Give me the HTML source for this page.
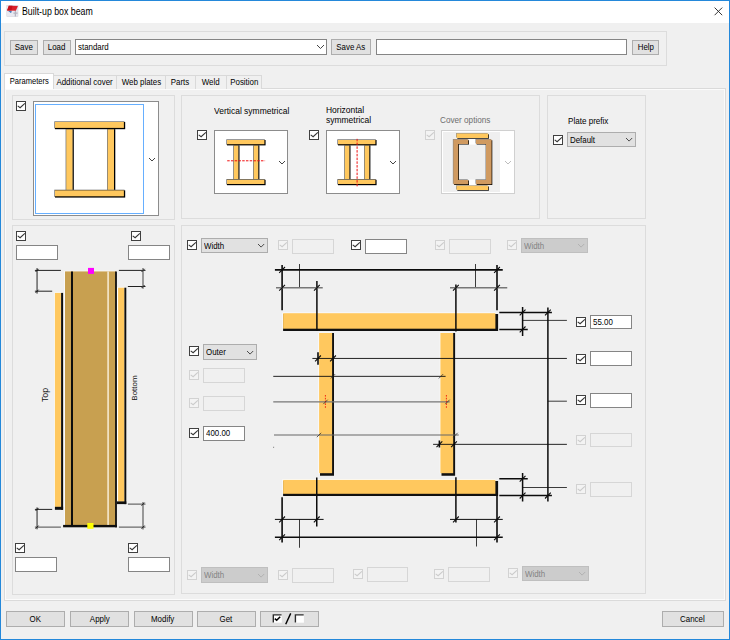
<!DOCTYPE html>
<html><head><meta charset="utf-8"><title>Built-up box beam</title>
<style>
html,body{margin:0;padding:0;}
body{width:730px;height:640px;overflow:hidden;background:#f0f0f0;position:relative;font-family:"Liberation Sans",sans-serif;font-size:8.6px;color:#000;}
.a{position:absolute;box-sizing:border-box;}
#win{left:0;top:0;width:730px;height:640px;border:1px solid #2488da;background:#f0f0f0;}
#title{left:1px;top:1px;width:728px;height:22px;background:#fff;}
.gb{border:1px solid #dcdcdc;}
.btn{background:#e1e1e1;border:1px solid #adadad;text-align:center;white-space:nowrap;}
.in{background:#fff;border:1px solid #858585;padding-left:2px;white-space:nowrap;}
.in.d{background:#f0f0f0;border-color:#d6d6d6;}
.cmb{background:#e1e1e1;border:1px solid #adadad;padding-left:2px;white-space:nowrap;}
.cmb.d{background:#cccccc;border-color:#bfbfbf;color:#838383;}
.cb{background:#fff;border:1px solid #404040;}
.cb.d{border-color:#d2d2d2;background:#f3f3f3;}
.cb svg{position:absolute;left:-1px;top:-1px;width:10px;height:10px;}
.t{white-space:nowrap;line-height:11px;}
.x{display:inline-block;transform:scaleX(.92);transform-origin:0 50%;}
.xc{display:inline-block;transform:scaleX(.92);transform-origin:50% 50%;}
.tab{border:1px solid #d9d9d9;border-bottom:none;background:#f0f0f0;text-align:center;white-space:nowrap;}
</style></head><body>
<div class="a" id="win"></div>
<div class="a" id="title"></div>
<svg class="a" style="left:6px;top:5px;width:13px;height:13px" viewBox="6 5 13 13"><rect x="6.8" y="5.4" width="11.2" height="11.2" fill="#e9e9f1" stroke="#cfcfd8" stroke-width="0.5"/><path d="M8.8 5.7L17.9 5.9L15.9 10.8L7.1 10.4Z" fill="#d8202a"/><path d="M8.8 5.7L12.5 5.8L11.5 10.6L7.1 10.4Z" fill="#c40f1a"/><path d="M8.2 11.1L11.9 11.3L11 13Z" fill="#2a6ab4"/><path d="M13.4 13.2H17.6M15.4 11V16.4" stroke="#b4b4c0" stroke-width="1.3"/></svg>
<div class="a t" style="left:22.4px;top:6px;font-size:10.4px;"><span class="x" style="transform:scaleX(.845)">Built-up box beam</span></div>
<svg class="a" style="left:713px;top:5.5px;width:11px;height:11px" viewBox="0 0 11 11"><path d="M1.6 1.6l7.6 7.6M9.2 1.6l-7.6 7.6" stroke="#2a2a2a" stroke-width="0.95" fill="none"/></svg>

<div class="a gb" style="left:4px;top:31px;width:663px;height:35px"></div>
<div class="a btn" style="left:10px;top:40px;width:28px;height:15px;line-height:13px"><span class="xc">Save</span></div>
<div class="a btn" style="left:43px;top:40px;width:28px;height:15px;line-height:13px"><span class="xc">Load</span></div>
<div class="a in" style="left:75px;top:39px;width:252px;height:16px;line-height:14px"><span class="x">standard</span></div>
<svg class="a" style="left:315.5px;top:44.25px;width:9px;height:5.5px" viewBox="-1 -1 9 5.5"><path d="M0 0L3.5 3.5L7 0" stroke="#444" stroke-width="1" fill="none"/></svg>
<div class="a btn" style="left:331px;top:39px;width:40px;height:16px;line-height:14px"><span class="xc">Save As</span></div>
<div class="a in" style="left:376px;top:39px;width:251px;height:16px;line-height:14px"><span class="x"></span></div>
<div class="a btn" style="left:632px;top:40px;width:27px;height:15px;line-height:13px"><span class="xc">Help</span></div>
<div class="a" style="left:4px;top:88px;width:722px;height:513px;border:1px solid #dadada;background:#f0f0f0;box-shadow:inset 0 0 0 1px #fbfbfb;"></div>
<div class="a tab" style="left:52px;top:75px;width:65px;height:14px;line-height:13px;"><span class="xc">Additional cover</span></div>
<div class="a tab" style="left:116px;top:75px;width:50px;height:14px;line-height:13px;"><span class="xc">Web plates</span></div>
<div class="a tab" style="left:165px;top:75px;width:31px;height:14px;line-height:13px;"><span class="xc">Parts</span></div>
<div class="a tab" style="left:195px;top:75px;width:32px;height:14px;line-height:13px;"><span class="xc">Weld</span></div>
<div class="a tab" style="left:226px;top:75px;width:36px;height:14px;line-height:13px;"><span class="xc">Position</span></div>
<div class="a tab" style="left:4px;top:73px;width:50px;height:16px;line-height:15px;background:#fff;"><span class="xc" style="transform:scaleX(0.88)">Parameters</span></div>
<div class="a gb" style="left:12px;top:95px;width:163px;height:125px"></div>
<div class="a gb" style="left:181px;top:95px;width:359px;height:124px"></div>
<div class="a gb" style="left:547px;top:95px;width:99px;height:124px"></div>
<div class="a gb" style="left:12px;top:225px;width:163px;height:370px"></div>
<div class="a gb" style="left:181px;top:225px;width:465px;height:369px"></div>
<div class="a cb" style="left:16px;top:101px;width:10px;height:10px"><svg viewBox="0 0 10 10"><path d="M1.7 4.9L4.1 6.7L8.9 2.3" stroke="#333" stroke-width="1.05" fill="none"/></svg></div>
<div class="a" style="left:33px;top:101px;width:126px;height:115px;background:#fff;border:1px solid #8c8c8c"></div>
<div class="a" style="left:35px;top:104px;width:109px;height:110px;border:1px solid #66afff"></div>
<svg class="a" style="left:52.7px;top:119.8px;width:74.2px;height:79.6px" viewBox="-2 -2 74.2 79.6"><rect x="10.600000000000001" y="7.2" width="7.5" height="61.199999999999996" fill="#707070"/><rect x="17.5" y="7.2" width="1.3" height="61.199999999999996" fill="#000"/><rect x="11.3" y="7.2" width="6.2" height="61.199999999999996" fill="#ffc85e"/><rect x="52.099999999999994" y="7.2" width="7.5" height="61.199999999999996" fill="#707070"/><rect x="59.0" y="7.2" width="1.3" height="61.199999999999996" fill="#000"/><rect x="52.8" y="7.2" width="6.2" height="61.199999999999996" fill="#ffc85e"/><rect x="-0.7" y="-0.7" width="70.2" height="7.2" fill="#707070"/><rect x="0" y="0" width="70.2" height="7.2" fill="#000"/><rect x="0" y="0" width="68.9" height="5.9" fill="#ffc85e"/><rect x="-0.7" y="67.69999999999999" width="70.2" height="7.2" fill="#707070"/><rect x="0" y="68.39999999999999" width="70.2" height="7.2" fill="#000"/><rect x="0" y="68.39999999999999" width="68.9" height="5.9" fill="#ffc85e"/></svg>
<svg class="a" style="left:147.5px;top:157.0px;width:8px;height:5px" viewBox="-1 -1 8 5"><path d="M0 0L3.0 3L6 0" stroke="#444" stroke-width="1" fill="none"/></svg>
<div class="a t" style="left:214px;top:106px;color:#000;"><span class="x" style="transform:scaleX(0.985)">Vertical symmetrical</span></div>
<div class="a cb" style="left:197px;top:130px;width:10px;height:10px"><svg viewBox="0 0 10 10"><path d="M1.7 4.9L4.1 6.7L8.9 2.3" stroke="#333" stroke-width="1.05" fill="none"/></svg></div>
<div class="a" style="left:214px;top:130px;width:74px;height:64px;background:#fff;border:1px solid #8c8c8c"></div>
<svg class="a" style="left:224.8px;top:137.7px;width:42.6px;height:49.2px" viewBox="-2 -2 42.6 49.2"><rect x="6.2" y="5.4" width="5.6" height="34.400000000000006" fill="#707070"/><rect x="11.3" y="5.4" width="1.2" height="34.400000000000006" fill="#000"/><rect x="6.9" y="5.4" width="4.3999999999999995" height="34.400000000000006" fill="#ffc85e"/><rect x="26.1" y="5.4" width="5.6" height="34.400000000000006" fill="#707070"/><rect x="31.2" y="5.4" width="1.2" height="34.400000000000006" fill="#000"/><rect x="26.8" y="5.4" width="4.3999999999999995" height="34.400000000000006" fill="#ffc85e"/><rect x="-0.7" y="-0.7" width="38.6" height="5.4" fill="#707070"/><rect x="0" y="0" width="38.6" height="5.4" fill="#000"/><rect x="0" y="0" width="37.4" height="4.2" fill="#ffc85e"/><rect x="-0.7" y="39.1" width="38.6" height="5.4" fill="#707070"/><rect x="0" y="39.800000000000004" width="38.6" height="5.4" fill="#000"/><rect x="0" y="39.800000000000004" width="37.4" height="4.2" fill="#ffc85e"/><path d="M0.2 20.8H38.1" stroke="#f01010" stroke-width="1" stroke-dasharray="2.5 1.25"/></svg>
<svg class="a" style="left:277.5px;top:159.5px;width:8px;height:5px" viewBox="-1 -1 8 5"><path d="M0 0L3.0 3L6 0" stroke="#444" stroke-width="1" fill="none"/></svg>
<div class="a t" style="left:326px;top:105px;color:#000;"><span class="x" style="transform:scaleX(0.985)">Horizontal</span></div>
<div class="a t" style="left:326px;top:115px;color:#000;"><span class="x" style="transform:scaleX(0.985)">symmetrical</span></div>
<div class="a cb" style="left:309px;top:130px;width:10px;height:10px"><svg viewBox="0 0 10 10"><path d="M1.7 4.9L4.1 6.7L8.9 2.3" stroke="#333" stroke-width="1.05" fill="none"/></svg></div>
<div class="a" style="left:326px;top:130px;width:74px;height:64px;background:#fff;border:1px solid #8c8c8c"></div>
<svg class="a" style="left:336.4px;top:137.7px;width:42.6px;height:49.2px" viewBox="-2 -2 42.6 49.2"><rect x="6.2" y="5.4" width="5.6" height="34.400000000000006" fill="#707070"/><rect x="11.3" y="5.4" width="1.2" height="34.400000000000006" fill="#000"/><rect x="6.9" y="5.4" width="4.3999999999999995" height="34.400000000000006" fill="#ffc85e"/><rect x="26.1" y="5.4" width="5.6" height="34.400000000000006" fill="#707070"/><rect x="31.2" y="5.4" width="1.2" height="34.400000000000006" fill="#000"/><rect x="26.8" y="5.4" width="4.3999999999999995" height="34.400000000000006" fill="#ffc85e"/><rect x="-0.7" y="-0.7" width="38.6" height="5.4" fill="#707070"/><rect x="0" y="0" width="38.6" height="5.4" fill="#000"/><rect x="0" y="0" width="37.4" height="4.2" fill="#ffc85e"/><rect x="-0.7" y="39.1" width="38.6" height="5.4" fill="#707070"/><rect x="0" y="39.800000000000004" width="38.6" height="5.4" fill="#000"/><rect x="0" y="39.800000000000004" width="37.4" height="4.2" fill="#ffc85e"/><path d="M19.1 -4.9V49.3" stroke="#f01010" stroke-width="1" stroke-dasharray="2.5 1.25"/></svg>
<svg class="a" style="left:389.0px;top:159.5px;width:8px;height:5px" viewBox="-1 -1 8 5"><path d="M0 0L3.0 3L6 0" stroke="#444" stroke-width="1" fill="none"/></svg>
<div class="a t" style="left:440px;top:115px;color:#6d6d6d;"><span class="x" style="transform:scaleX(0.95)">Cover options</span></div>
<div class="a cb d" style="left:425px;top:130px;width:10px;height:10px"><svg viewBox="0 0 10 10"><path d="M1.7 4.9L4.1 6.7L8.9 2.3" stroke="#cbcbcb" stroke-width="1.05" fill="none"/></svg></div>
<div class="a" style="left:441px;top:130px;width:74px;height:64px;background:#fff;border:1px solid #d0d0d0"></div>
<div class="a" style="left:443px;top:132px;width:57px;height:60px;background:#efefef"></div>
<svg class="a" style="left:450px;top:131px;width:46px;height:62px" viewBox="450 131 46 62"><path d="M456.6 133.6H488.2V138H456.6Z" fill="#8a8a8a" transform="translate(-0.55 -0.55)"/><path d="M456.6 133.6H488.2V138H456.6Z" fill="#000" transform="translate(0.7 0.7)"/><path d="M456.6 133.6H488.2V138H456.6Z" fill="#ffc85e"/><path d="M456.6 185.8H488.2V190H456.6Z" fill="#8a8a8a" transform="translate(-0.55 -0.55)"/><path d="M456.6 185.8H488.2V190H456.6Z" fill="#000" transform="translate(0.7 0.7)"/><path d="M456.6 185.8H488.2V190H456.6Z" fill="#ffc85e"/><rect x="469" y="139" width="6.6" height="5.6" fill="#fff"/><rect x="469" y="179.6" width="6.6" height="5.6" fill="#fff"/><path d="M453.4 139.5H468.3V143.9H458.3V179.9H468.3V184.3H453.4Z" fill="#8a8a8a" transform="translate(-0.55 -0.55)"/><path d="M453.4 139.5H468.3V143.9H458.3V179.9H468.3V184.3H453.4Z" fill="#000" transform="translate(0.7 0.7)"/><path d="M453.4 139.5H468.3V143.9H458.3V179.9H468.3V184.3H453.4Z" fill="#d09a60"/><path d="M476 139.5H491.6V184.3H476V179.9H486V143.9H476Z" fill="#8a8a8a" transform="translate(-0.55 -0.55)"/><path d="M476 139.5H491.6V184.3H476V179.9H486V143.9H476Z" fill="#000" transform="translate(0.7 0.7)"/><path d="M476 139.5H491.6V184.3H476V179.9H486V143.9H476Z" fill="#d09a60"/></svg>
<svg class="a" style="left:504.0px;top:159.5px;width:8px;height:5px" viewBox="-1 -1 8 5"><path d="M0 0L3.0 3L6 0" stroke="#bdbdbd" stroke-width="1" fill="none"/></svg>
<div class="a t" style="left:568px;top:116px;color:#000;"><span class="x" style="transform:scaleX(0.94)">Plate prefix</span></div>
<div class="a cb" style="left:553px;top:135px;width:10px;height:10px"><svg viewBox="0 0 10 10"><path d="M1.7 4.9L4.1 6.7L8.9 2.3" stroke="#333" stroke-width="1.05" fill="none"/></svg></div>
<div class="a cmb" style="left:567px;top:132px;width:69px;height:15px;line-height:14px"><span class="x">Default</span></div>
<svg class="a" style="left:625.4px;top:137.25px;width:8.2px;height:5.1px" viewBox="-1 -1 8.2 5.1"><path d="M0 0L3.1 3.1L6.2 0" stroke="#4a4a4a" stroke-width="1" fill="none"/></svg>
<div class="a cb" style="left:16px;top:231px;width:10px;height:10px"><svg viewBox="0 0 10 10"><path d="M1.7 4.9L4.1 6.7L8.9 2.3" stroke="#333" stroke-width="1.05" fill="none"/></svg></div>
<div class="a in" style="left:16px;top:245px;width:42px;height:15px;line-height:13px"><span class="x"></span></div>
<div class="a cb" style="left:131px;top:231px;width:10px;height:10px"><svg viewBox="0 0 10 10"><path d="M1.7 4.9L4.1 6.7L8.9 2.3" stroke="#333" stroke-width="1.05" fill="none"/></svg></div>
<div class="a in" style="left:128px;top:245px;width:42px;height:15px;line-height:13px"><span class="x"></span></div>
<div class="a cb" style="left:15px;top:543px;width:10px;height:10px"><svg viewBox="0 0 10 10"><path d="M1.7 4.9L4.1 6.7L8.9 2.3" stroke="#333" stroke-width="1.05" fill="none"/></svg></div>
<div class="a in" style="left:15px;top:557px;width:42px;height:15px;line-height:13px"><span class="x"></span></div>
<div class="a cb" style="left:128px;top:543px;width:10px;height:10px"><svg viewBox="0 0 10 10"><path d="M1.7 4.9L4.1 6.7L8.9 2.3" stroke="#333" stroke-width="1.05" fill="none"/></svg></div>
<div class="a in" style="left:128px;top:557px;width:42px;height:15px;line-height:13px"><span class="x"></span></div>
<svg class="a" style="left:30px;top:262px;width:125px;height:272px" viewBox="30 262 125 272">
<rect x="64.4" y="270.8" width="52" height="255" fill="#fff"/>
<rect x="54.4" y="292.4" width="7" height="216" fill="#fff"/>
<rect x="117" y="287.2" width="8" height="216" fill="#fff"/>
<rect x="65" y="271.4" width="51" height="255" fill="#c8a050"/>
<rect x="54.9" y="292.9" width="6" height="214" fill="#ffc85e"/>
<rect x="118.1" y="287.7" width="6.4" height="214" fill="#ffc85e"/>
<g fill="#0e0e0e">
<rect x="61.1" y="292.9" width="2" height="216.9"/>
<rect x="54.9" y="506.8" width="8.2" height="3"/>
<rect x="124.4" y="287.7" width="1.9" height="216.4"/>
<rect x="116.9" y="501.4" width="9.4" height="2.7"/>
<rect x="71" y="271.5" width="2" height="255"/>
<rect x="115.1" y="271.5" width="1.8" height="255.8"/>
<rect x="63.1" y="524.9" width="53.8" height="2.4"/>
</g>
<rect x="107.3" y="271.4" width="1.6" height="253.5" fill="#f6e8cf"/>
<rect x="88" y="267.9" width="6" height="6" fill="#ff00ff"/>
<rect x="87.3" y="523" width="6.2" height="5.8" fill="#ffff00"/>
<g stroke="#222" stroke-width="1" fill="none">
<path d="M37.05 268.1V293.6M34.9 270.4H60.9M34.9 291.2H52.2"/>
<path d="M118.9 270.4H145.5M127.9 286.5H145.5"/>
<path d="M37.05 507.4V529.3M34.9 509.4H52.2"/>
</g>
<g stroke="#6a6a6a" stroke-width="1.3" fill="none">
<path d="M143 268V288.7M143 502V529.5M127.9 504.1H145.5M118.9 527.1H145.5M34.9 527.1H60.9"/>
</g>
<g stroke="#111" stroke-width="0.9">
<path d="M35.5 272l3.1-3.1M35.5 292.8l3.1-3.1M141.5 272l3.1-3.1M141.5 288.1l3.1-3.1M35.5 511l3.1-3.1M35.5 528.7l3.1-3.1M141.5 505.7l3.1-3.1M141.5 528.7l3.1-3.1"/>
</g>
</svg>
<div class="a t" style="left:34.5px;top:390px;width:20px;height:10px;line-height:10px;text-align:center;font-size:8.8px;color:#111;transform:rotate(-90deg)">Top</div>
<div class="a t" style="left:119.5px;top:382.5px;width:30px;height:10px;line-height:10px;text-align:center;font-size:8px;color:#111;transform:rotate(-90deg)">Bottom</div>
<div class="a cb" style="left:187px;top:240px;width:10px;height:10px"><svg viewBox="0 0 10 10"><path d="M1.7 4.9L4.1 6.7L8.9 2.3" stroke="#333" stroke-width="1.05" fill="none"/></svg></div>
<div class="a cmb" style="left:201px;top:238px;width:67px;height:15px;line-height:14px"><span class="x">Width</span></div>
<svg class="a" style="left:257.4px;top:243.25px;width:8.2px;height:5.1px" viewBox="-1 -1 8.2 5.1"><path d="M0 0L3.1 3.1L6.2 0" stroke="#4a4a4a" stroke-width="1" fill="none"/></svg>
<div class="a cb d" style="left:278px;top:240px;width:10px;height:10px"><svg viewBox="0 0 10 10"><path d="M1.7 4.9L4.1 6.7L8.9 2.3" stroke="#cbcbcb" stroke-width="1.05" fill="none"/></svg></div>
<div class="a in d" style="left:292px;top:239px;width:42px;height:14.5px;line-height:12.5px"><span class="x"></span></div>
<div class="a cb" style="left:351px;top:240px;width:10px;height:10px"><svg viewBox="0 0 10 10"><path d="M1.7 4.9L4.1 6.7L8.9 2.3" stroke="#333" stroke-width="1.05" fill="none"/></svg></div>
<div class="a in" style="left:365px;top:239px;width:42px;height:14.5px;line-height:12.5px"><span class="x"></span></div>
<div class="a cb d" style="left:435px;top:240px;width:10px;height:10px"><svg viewBox="0 0 10 10"><path d="M1.7 4.9L4.1 6.7L8.9 2.3" stroke="#cbcbcb" stroke-width="1.05" fill="none"/></svg></div>
<div class="a in d" style="left:449px;top:239px;width:42px;height:14.5px;line-height:12.5px"><span class="x"></span></div>
<div class="a cb d" style="left:507px;top:240px;width:10px;height:10px"><svg viewBox="0 0 10 10"><path d="M1.7 4.9L4.1 6.7L8.9 2.3" stroke="#cbcbcb" stroke-width="1.05" fill="none"/></svg></div>
<div class="a cmb d" style="left:521px;top:238px;width:67px;height:15px;line-height:14px"><span class="x">Width</span></div>
<svg class="a" style="left:577.4px;top:243.25px;width:8.2px;height:5.1px" viewBox="-1 -1 8.2 5.1"><path d="M0 0L3.1 3.1L6.2 0" stroke="#b2b2b2" stroke-width="1" fill="none"/></svg>
<div class="a cb" style="left:189px;top:346px;width:10px;height:10px"><svg viewBox="0 0 10 10"><path d="M1.7 4.9L4.1 6.7L8.9 2.3" stroke="#333" stroke-width="1.05" fill="none"/></svg></div>
<div class="a cmb" style="left:203px;top:344px;width:54px;height:16px;line-height:15px"><span class="x">Outer</span></div>
<svg class="a" style="left:246.4px;top:349.75px;width:8.2px;height:5.1px" viewBox="-1 -1 8.2 5.1"><path d="M0 0L3.1 3.1L6.2 0" stroke="#4a4a4a" stroke-width="1" fill="none"/></svg>
<div class="a cb d" style="left:189px;top:370px;width:10px;height:10px"><svg viewBox="0 0 10 10"><path d="M1.7 4.9L4.1 6.7L8.9 2.3" stroke="#cbcbcb" stroke-width="1.05" fill="none"/></svg></div>
<div class="a in d" style="left:203px;top:368px;width:42px;height:14.5px;line-height:12.5px"><span class="x"></span></div>
<div class="a cb d" style="left:189px;top:398px;width:10px;height:10px"><svg viewBox="0 0 10 10"><path d="M1.7 4.9L4.1 6.7L8.9 2.3" stroke="#cbcbcb" stroke-width="1.05" fill="none"/></svg></div>
<div class="a in d" style="left:203px;top:396px;width:42px;height:14.5px;line-height:12.5px"><span class="x"></span></div>
<div class="a cb" style="left:189px;top:428px;width:10px;height:10px"><svg viewBox="0 0 10 10"><path d="M1.7 4.9L4.1 6.7L8.9 2.3" stroke="#333" stroke-width="1.05" fill="none"/></svg></div>
<div class="a in" style="left:203px;top:426px;width:42px;height:15px;line-height:13px"><span class="x">400.00</span></div>
<div class="a cb" style="left:576px;top:317px;width:10px;height:10px"><svg viewBox="0 0 10 10"><path d="M1.7 4.9L4.1 6.7L8.9 2.3" stroke="#333" stroke-width="1.05" fill="none"/></svg></div>
<div class="a in" style="left:590px;top:314.5px;width:41.5px;height:14.5px;line-height:12.5px"><span class="x">55.00</span></div>
<div class="a cb" style="left:576px;top:353.5px;width:10px;height:10px"><svg viewBox="0 0 10 10"><path d="M1.7 4.9L4.1 6.7L8.9 2.3" stroke="#333" stroke-width="1.05" fill="none"/></svg></div>
<div class="a in" style="left:590px;top:351px;width:41.5px;height:14.5px;line-height:12.5px"><span class="x"></span></div>
<div class="a cb" style="left:576px;top:395px;width:10px;height:10px"><svg viewBox="0 0 10 10"><path d="M1.7 4.9L4.1 6.7L8.9 2.3" stroke="#333" stroke-width="1.05" fill="none"/></svg></div>
<div class="a in" style="left:590px;top:393px;width:41.5px;height:14.5px;line-height:12.5px"><span class="x"></span></div>
<div class="a cb d" style="left:576px;top:435px;width:10px;height:10px"><svg viewBox="0 0 10 10"><path d="M1.7 4.9L4.1 6.7L8.9 2.3" stroke="#cbcbcb" stroke-width="1.05" fill="none"/></svg></div>
<div class="a in d" style="left:590px;top:432.5px;width:41.5px;height:14.5px;line-height:12.5px"><span class="x"></span></div>
<div class="a cb d" style="left:576px;top:484px;width:10px;height:10px"><svg viewBox="0 0 10 10"><path d="M1.7 4.9L4.1 6.7L8.9 2.3" stroke="#cbcbcb" stroke-width="1.05" fill="none"/></svg></div>
<div class="a in d" style="left:590px;top:482px;width:41.5px;height:14.5px;line-height:12.5px"><span class="x"></span></div>
<div class="a cb d" style="left:187px;top:570px;width:10px;height:10px"><svg viewBox="0 0 10 10"><path d="M1.7 4.9L4.1 6.7L8.9 2.3" stroke="#cbcbcb" stroke-width="1.05" fill="none"/></svg></div>
<div class="a cmb d" style="left:201px;top:567px;width:67px;height:16px;line-height:15px"><span class="x">Width</span></div>
<svg class="a" style="left:257.4px;top:572.75px;width:8.2px;height:5.1px" viewBox="-1 -1 8.2 5.1"><path d="M0 0L3.1 3.1L6.2 0" stroke="#b2b2b2" stroke-width="1" fill="none"/></svg>
<div class="a cb d" style="left:278px;top:570px;width:10px;height:10px"><svg viewBox="0 0 10 10"><path d="M1.7 4.9L4.1 6.7L8.9 2.3" stroke="#cbcbcb" stroke-width="1.05" fill="none"/></svg></div>
<div class="a in d" style="left:292px;top:568px;width:42px;height:14.5px;line-height:12.5px"><span class="x"></span></div>
<div class="a cb d" style="left:353px;top:569px;width:10px;height:10px"><svg viewBox="0 0 10 10"><path d="M1.7 4.9L4.1 6.7L8.9 2.3" stroke="#cbcbcb" stroke-width="1.05" fill="none"/></svg></div>
<div class="a in d" style="left:367px;top:567px;width:41px;height:14.5px;line-height:12.5px"><span class="x"></span></div>
<div class="a cb d" style="left:434px;top:569px;width:10px;height:10px"><svg viewBox="0 0 10 10"><path d="M1.7 4.9L4.1 6.7L8.9 2.3" stroke="#cbcbcb" stroke-width="1.05" fill="none"/></svg></div>
<div class="a in d" style="left:448px;top:567px;width:42px;height:14.5px;line-height:12.5px"><span class="x"></span></div>
<div class="a cb d" style="left:508px;top:567.5px;width:10px;height:10px"><svg viewBox="0 0 10 10"><path d="M1.7 4.9L4.1 6.7L8.9 2.3" stroke="#cbcbcb" stroke-width="1.05" fill="none"/></svg></div>
<div class="a cmb d" style="left:522px;top:565.5px;width:67px;height:15px;line-height:14px"><span class="x">Width</span></div>
<svg class="a" style="left:578.4px;top:570.75px;width:8.2px;height:5.1px" viewBox="-1 -1 8.2 5.1"><path d="M0 0L3.1 3.1L6.2 0" stroke="#b2b2b2" stroke-width="1" fill="none"/></svg>
<svg class="a" style="left:270px;top:258px;width:300px;height:295px" viewBox="270 258 300 295">
<g fill="#fff">
<rect x="282.5" y="312.6" width="213" height="16"/>
<rect x="282.5" y="479.2" width="213" height="15"/>
<rect x="318.5" y="332.6" width="13" height="141"/>
<rect x="439.8" y="332.6" width="13" height="141"/>
</g>
<g fill="#111">
<rect x="283.1" y="314" width="215" height="17"/>
<rect x="283.1" y="481" width="215" height="15"/>
<rect x="320" y="333" width="14" height="142.75"/>
<rect x="441.5" y="333" width="13.6" height="142.75"/>
</g>
<g fill="#ffc85e">
<rect x="283.1" y="313.2" width="212.3" height="15.5"/>
<rect x="283.1" y="479.9" width="212.3" height="13.9"/>
<rect x="319.1" y="333" width="13" height="140.2"/>
<rect x="440.4" y="333" width="12.8" height="140.2"/>
</g>
<g stroke="#0c0c0c" fill="none">
<path stroke-width="1.6" d="M274.9 269.9H502.75M282.1 264.9V310.2M497 264.9V310.2M274.9 537.25H502.75M282.1 497.25V542.5M497 496V542.5"/>
<path stroke-width="1.5" d="M499.3 312.5H551.9M499.3 329.4H527.75M499.3 478.75H527.75M499.3 495.6H551.9"/>
<path stroke-width="1.5" d="M522.6 306.9V336M547.9 307.5V501.5M522.6 473.1V501.5"/>
<path stroke-width="1.5" d="M316.9 281V331M455.9 284.5V331.5M316.75 477.5V526.5M455.9 477.25V522.5"/>
<path stroke-width="1.6" d="M318 352.25V364.75M439.4 440.6V447.5"/>
<path stroke-width="0.8" d="M299.5 264V287.75M475.5 264V287.75M299.5 519.4V547.75M476.5 519.4V546.5"/>
<path stroke-width="1" d="M274.9 519.4H323.6M450 519.4H502.75"/>
<path stroke-width="0.8" d="M522.6 320.4H566.9M522.6 487.5H566.9M547.9 401.2H566.9"/>
<path stroke-width="0.9" d="M312.4 358.45H566.9M273.25 376.35H445.6M433.1 444.35H566.9"/>
</g>
<g stroke="#777" fill="none" stroke-width="1.3">
<path d="M276 287.75H322.75M450 287.75H507.25M273.25 401.9H449.75"/>
<path stroke="#666" stroke-width="1" d="M274 435H458.75"/>
</g>
<g stroke="#e00" stroke-width="0.8" stroke-dasharray="1.6 1.2"><path d="M325.4 395V409M446.4 395V409"/></g>
<path d="M279.20000000000005 272.79999999999995L285.0 267.0M279.20000000000005 290.65L285.0 284.85M314.0 290.65L319.79999999999995 284.85M453.0 290.65L458.79999999999995 284.85M494.1 290.65L499.9 284.85M494.1 272.79999999999995L499.9 267.0M279.20000000000005 522.3L285.0 516.5M279.20000000000005 540.15L285.0 534.35M313.85 522.3L319.65 516.5M453.0 522.3L458.79999999999995 516.5M494.1 522.3L499.9 516.5M494.1 540.15L499.9 534.35M519.7 315.4L525.5 309.6M519.7 332.29999999999995L525.5 326.5M545.0 315.4L550.8 309.6M519.7 481.65L525.5 475.85M519.7 498.5L525.5 492.70000000000005M545.0 498.5L550.8 492.70000000000005M315.1 361.29999999999995L320.9 355.5M330.1 361.29999999999995L335.9 355.5M436.5 447.09999999999997L442.29999999999995 441.3M451.1 447.09999999999997L456.9 441.3" stroke="#0c0c0c" stroke-width="1.1"/>
<path d="M330.8 378.45L335.2 374.05M323.3 404.09999999999997L327.7 399.7M316.8 437.2L321.2 432.8M438.8 378.45L443.2 374.05M445.3 404.09999999999997L449.7 399.7M453.3 437.2L457.7 432.8" stroke="#222" stroke-width="0.7"/>
<rect x="273.2" y="446.8" width="0.9" height="0.9" fill="#555"/>
</svg>
<div class="a btn" style="left:6px;top:611px;width:59px;height:16px;line-height:14px"><span class="xc">OK</span></div>
<div class="a btn" style="left:70px;top:611px;width:59px;height:16px;line-height:14px"><span class="xc">Apply</span></div>
<div class="a btn" style="left:133.5px;top:611px;width:59px;height:16px;line-height:14px"><span class="xc">Modify</span></div>
<div class="a btn" style="left:196.5px;top:611px;width:59px;height:16px;line-height:14px"><span class="xc">Get</span></div>
<div class="a btn" style="left:260px;top:611px;width:59px;height:16px;line-height:14px"><span class="xc"></span></div>
<div class="a btn" style="left:661.5px;top:611px;width:62px;height:16px;line-height:14px"><span class="xc">Cancel</span></div>
<svg class="a" style="left:268px;top:610px;width:42px;height:18px" viewBox="268 610 42 18">
<rect x="272.7" y="614.3" width="9.1" height="8.4" fill="#fff"/>
<path d="M272.7 614.9H281.6M273.3 614.3V622.6" stroke="#2a2a2a" stroke-width="1.4" fill="none"/>
<path d="M274.8 618.6L276.7 620.3L280.2 616.8" stroke="#000" stroke-width="1.5" fill="none"/>
<path d="M285.7 624.3L290.7 613.4" stroke="#000" stroke-width="1.4"/>
<rect x="294.8" y="614.3" width="9.1" height="8.4" fill="#fff"/>
<path d="M294.8 614.9H303.7M295.4 614.3V622.6" stroke="#2a2a2a" stroke-width="1.4" fill="none"/>
</svg>
</body></html>
